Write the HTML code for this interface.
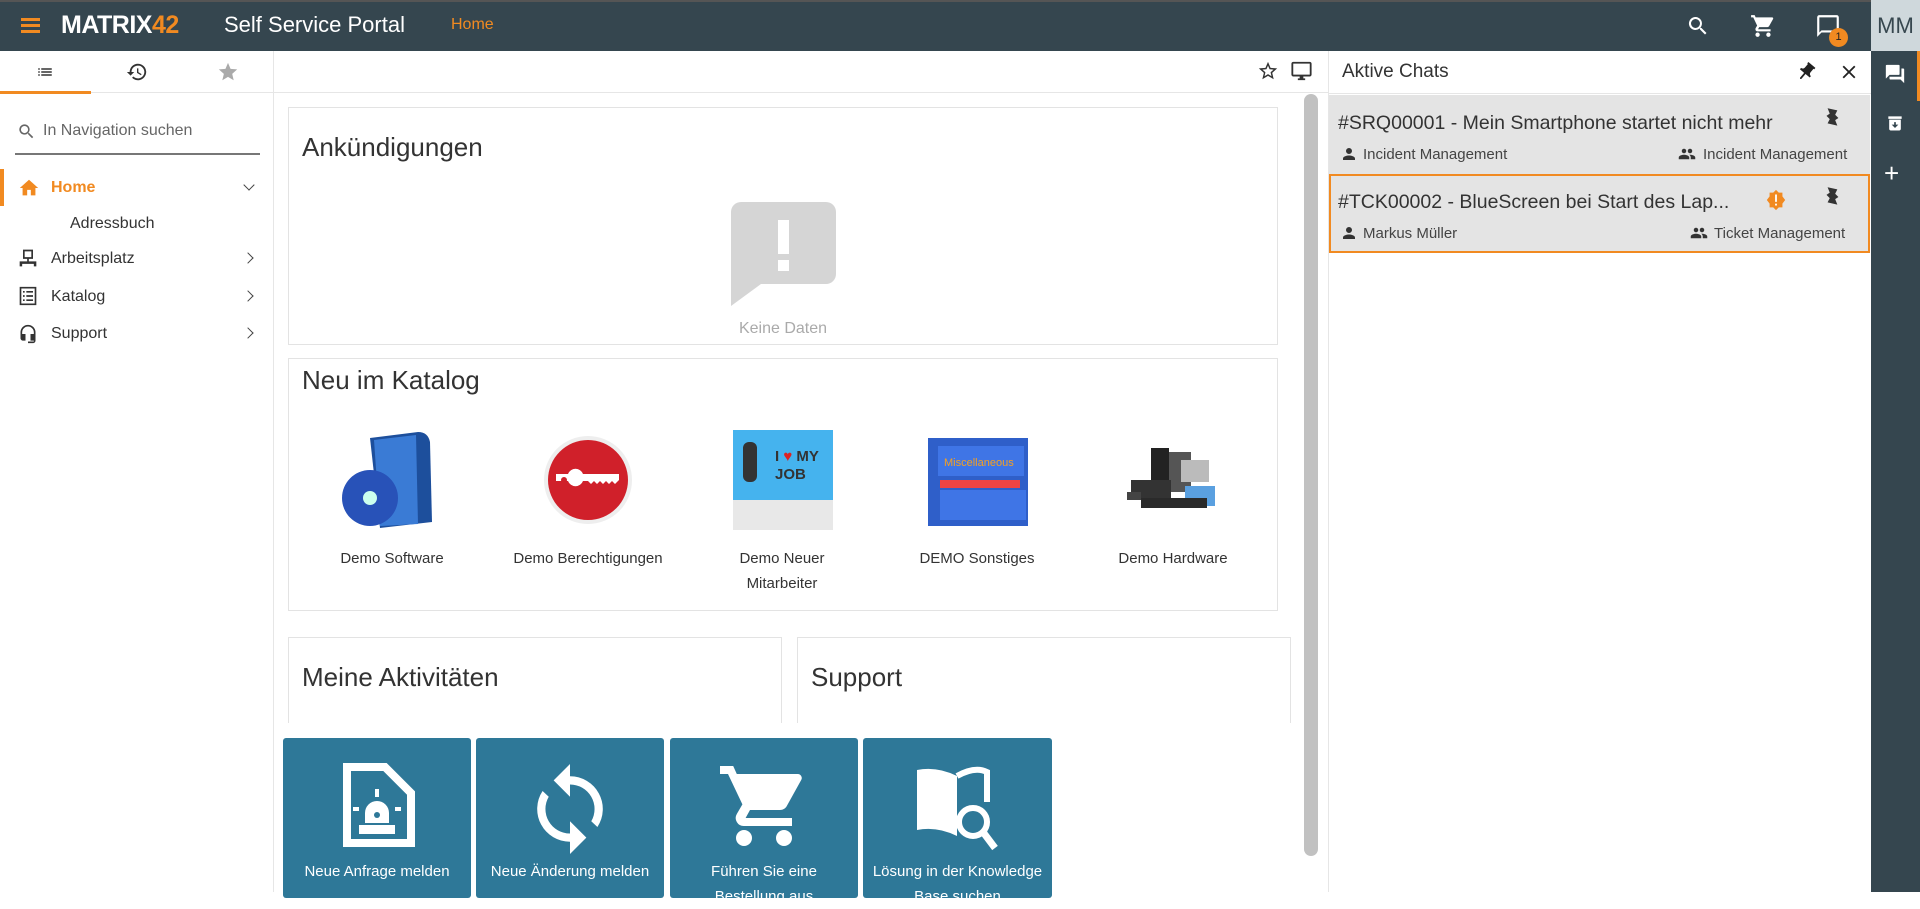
<!DOCTYPE html>
<html><head><meta charset="utf-8"><style>
*{box-sizing:border-box;margin:0;padding:0}
body{width:1920px;height:892px;overflow:hidden;font-family:"Liberation Sans",sans-serif;background:#fff;position:relative;color:#333}
.a{position:absolute}
.hdr{left:0;top:0;width:1920px;height:51px;background:#35464f;border-top:2px solid #555}
.wt{color:#fff}
.card{position:absolute;border:1px solid #e3e3e3;background:#fff}
.ct{position:absolute;left:13px;font-size:26px;color:#333}
.nav{position:absolute;left:51px;font-size:16px;color:#333}
.chev{position:absolute;left:244px;width:8px;height:8px;border-right:1.6px solid #444;border-bottom:1.6px solid #444}
.lbl{position:absolute;width:190px;text-align:center;font-size:15px;color:#333;line-height:25px}
.tile{position:absolute;top:738px;height:160px;background:#2e7898;border-radius:3px;color:#fff;text-align:center;font-size:15px}
.tile .t{position:absolute;top:121px;left:0;right:0;line-height:25px}
.chat{position:absolute;left:1329px;width:541px;height:79px;background:#e4e4e4}
.chat .h{position:absolute;left:9px;top:17px;font-size:19.5px;color:#333}
.chat .s{position:absolute;top:51px;font-size:15px;color:#444}
</style></head><body>
<div class="a hdr"></div>
<div class="a" style="left:21px;top:18px;width:19px;height:3px;background:#f18a21;box-shadow:0 6px 0 #f18a21,0 12px 0 #f18a21"></div>
<div class="a wt" style="left:61px;top:11px;font-size:25px;font-weight:bold;letter-spacing:-0.5px">MATRIX<span style="color:#f18a21">42</span></div>
<div class="a wt" style="left:224px;top:12px;font-size:22px">Self Service Portal</div>
<div class="a" style="left:451px;top:16px;font-size:16px;color:#f18a21">Home</div>
<svg class="a" style="left:1686px;top:14px" width="24" height="24" viewBox="0 0 24 24"><path fill="#fff" d="M15.5 14h-.8l-.3-.3A6.5 6.5 0 1 0 9.5 16a6.5 6.5 0 0 0 4.2-1.6l.3.3v.8l5 5 1.5-1.5-5-5zm-6 0a4.5 4.5 0 1 1 0-9 4.5 4.5 0 0 1 0 9z"/></svg>
<svg class="a" style="left:1750px;top:13px" width="26" height="26" viewBox="0 0 24 24"><path fill="#fff" d="M7 18a2 2 0 1 0 0 4 2 2 0 0 0 0-4zM1 2v2h2l3.6 7.6-1.4 2.4A2 2 0 0 0 7 17h12v-2H7.4l1.1-2h7.5c.7 0 1.4-.4 1.7-1l3.6-6.5A1 1 0 0 0 20.4 4H5.2l-.9-2H1zm16 16a2 2 0 1 0 0 4 2 2 0 0 0 0-4z"/></svg>
<svg class="a" style="left:1815px;top:13px" width="26" height="26" viewBox="0 0 24 24"><path fill="#fff" d="M20 2H4c-1.1 0-2 .9-2 2v18l4-4h14c1.1 0 2-.9 2-2V4c0-1.1-.9-2-2-2zm0 14H6l-2 2V4h16v12z"/></svg>
<div class="a" style="left:1829px;top:28px;width:19px;height:19px;border-radius:50%;background:#f18a21;color:#222;font-size:11px;text-align:center;line-height:19px">1</div>
<div class="a" style="left:1871px;top:0;width:49px;height:51px;background:#cfd8dc;color:#37474f;font-size:22px;text-align:center;line-height:51px">MM</div>
<div class="a" style="left:1871px;top:51px;width:49px;height:841px;background:#35464f"></div>
<div class="a" style="left:1917px;top:51px;width:3px;height:50px;background:#f18a21"></div>
<svg class="a" style="left:1884px;top:63px" width="22" height="22" viewBox="0 0 24 24"><path fill="#fff" d="M21 6h-2v9H6v2c0 .6.4 1 1 1h11l4 4V7c0-.6-.4-1-1-1zm-4 6V3c0-.6-.4-1-1-1H3c-.6 0-1 .4-1 1v14l4-4h10c.6 0 1-.4 1-1z"/></svg>
<svg class="a" style="left:1885px;top:113px" width="20" height="20" viewBox="0 0 24 24"><path fill="#fff" d="M20 4H4v3h16V4zM5 8v11c0 1 .9 2 2 2h10c1.1 0 2-1 2-2V8H5zm7 10l-4-4h3v-3h2v3h3l-4 4z"/></svg>
<div class="a wt" style="left:1884px;top:158px;font-size:26px">+</div>
<div class="a" style="left:273px;top:51px;width:1px;height:841px;background:#e6e6e6"></div>
<div class="a" style="left:0;top:92px;width:273px;height:1px;background:#e6e6e6"></div>
<div class="a" style="left:0;top:91px;width:91px;height:3px;background:#f18a21"></div>
<svg class="a" style="left:36px;top:63px" width="18" height="18" viewBox="0 0 24 24"><path fill="#333" d="M3 13h2v-2H3v2zm0 4h2v-2H3v2zm0-8h2V7H3v2zm4 4h14v-2H7v2zm0 4h14v-2H7v2zM7 7v2h14V7H7z"/></svg>
<svg class="a" style="left:126px;top:61px" width="22" height="22" viewBox="0 0 24 24"><path fill="#333" d="M13 3a9 9 0 0 0-9 9H1l4 4 4-4H6a7 7 0 1 1 2 4.9l-1.4 1.4A9 9 0 1 0 13 3zm-1 5v5l4.3 2.5.7-1.2-3.5-2.1V8H12z"/></svg>
<svg class="a" style="left:217px;top:61px" width="22" height="22" viewBox="0 0 24 24"><path fill="#aaa" d="M12 17.3l6.2 3.7-1.6-7L22 9.2l-7.2-.6L12 2 9.2 8.6 2 9.2 7.5 14l-1.7 7z"/></svg>
<svg class="a" style="left:17px;top:122px" width="19" height="19" viewBox="0 0 24 24"><path fill="#666" d="M15.5 14h-.8l-.3-.3A6.5 6.5 0 1 0 9.5 16a6.5 6.5 0 0 0 4.2-1.6l.3.3v.8l5 5 1.5-1.5-5-5zm-6 0a4.5 4.5 0 1 1 0-9 4.5 4.5 0 0 1 0 9z"/></svg>
<div class="a" style="left:43px;top:122px;font-size:16px;color:#666">In Navigation suchen</div>
<div class="a" style="left:15px;top:153px;width:245px;height:1.5px;background:#777"></div>
<div class="a" style="left:0;top:169px;width:4px;height:37px;background:#f18a21"></div>
<svg class="a" style="left:18px;top:177px" width="22" height="22" viewBox="0 0 24 24"><path fill="#f18a21" d="M10 20v-6h4v6h5v-8h3L12 3 2 12h3v8z"/></svg>
<div class="nav" style="top:179px;color:#f18a21;font-weight:bold">Home</div>
<div class="a" style="left:245px;top:181px;width:8px;height:8px;border-right:1.6px solid #444;border-bottom:1.6px solid #444;transform:rotate(45deg)"></div>
<div class="nav" style="left:70px;top:215px">Adressbuch</div>
<svg class="a" style="left:18px;top:248px" width="20" height="20" viewBox="0 0 24 24"><path fill="#333" d="M6 2h12v11H6zM8 4v7h8V4zM11 13h2v3h-2zM2 16h20v6h-3v-3H5v3H2z"/></svg>
<div class="nav" style="top:250px">Arbeitsplatz</div>
<div class="chev" style="top:254px;transform:rotate(-45deg)"></div>
<svg class="a" style="left:18px;top:286px" width="20" height="20" viewBox="0 0 24 24"><path fill="none" stroke="#333" stroke-width="2" d="M3 2h18v20H3z"/><path fill="#333" d="M6 6h2v2H6zm4 0h8v2h-8zM6 11h2v2H6zm4 0h8v2h-8zM6 16h2v2H6zm4 0h8v2h-8z"/></svg>
<div class="nav" style="top:288px">Katalog</div>
<div class="chev" style="top:292px;transform:rotate(-45deg)"></div>
<svg class="a" style="left:18px;top:323px" width="20" height="22" viewBox="0 0 24 24"><path fill="#333" d="M12 1a9 9 0 0 0-9 9v7c0 1.7 1.3 3 3 3h3v-8H5v-2a7 7 0 0 1 14 0v2h-4v8h4v1h-7v2h6c1.7 0 3-1.3 3-3V10a9 9 0 0 0-9-9z"/></svg>
<div class="nav" style="top:325px">Support</div>
<div class="chev" style="top:329px;transform:rotate(-45deg)"></div>
<div class="a" style="left:274px;top:92px;width:1055px;height:1px;background:#e6e6e6"></div>
<svg class="a" style="left:1257px;top:60px" width="22" height="22" viewBox="0 0 24 24"><path fill="#333" d="M22 9.2l-7.2-.6L12 2 9.2 8.6 2 9.2 7.5 14l-1.7 7 6.2-3.7 6.2 3.7-1.6-7L22 9.2zM12 15.4l-3.8 2.3 1-4.3-3.3-2.9 4.4-.4L12 6.1l1.7 4 4.4.4-3.3 2.9 1 4.3-3.8-2.3z"/></svg>
<svg class="a" style="left:1290px;top:60px" width="23" height="22" viewBox="0 0 24 24"><path fill="#333" d="M21 2H3c-1.1 0-2 .9-2 2v12c0 1.1.9 2 2 2h7v2H8v2h8v-2h-2v-2h7c1.1 0 2-.9 2-2V4c0-1.1-.9-2-2-2zm0 14H3V4h18v12z"/></svg>
<div class="a" style="left:1304px;top:94px;width:14px;height:762px;background:#c1c1c1;border-radius:7px"></div>
<div class="a" style="left:1328px;top:51px;width:1px;height:841px;background:#e6e6e6"></div>
<div class="card" style="left:288px;top:107px;width:990px;height:238px">
 <div class="ct" style="top:24px">Ankündigungen</div>
 <svg class="a" style="left:442px;top:94px" width="105" height="104" viewBox="0 0 105 104"><path fill="#d5d5d5" d="M10 0h85a10 10 0 0 1 10 10v62a10 10 0 0 1-10 10H30L0 104V10A10 10 0 0 1 10 0z"/><rect x="47" y="18" width="11" height="34" fill="#fff"/><rect x="47" y="58" width="11" height="11" fill="#fff"/></svg>
 <div class="a" style="left:0;width:100%;top:212px;text-align:center;font-size:16px;color:#aaa">Keine Daten</div>
</div>
<div class="card" style="left:288px;top:358px;width:990px;height:253px">
 <div class="ct" style="top:6px">Neu im Katalog</div>
</div>
<svg class="a" style="left:340px;top:430px" width="104" height="100" viewBox="0 0 104 100"><path fill="#1d4f9c" d="M30 8 L78 2 Q88 2 90 12 L92 92 L40 98 Z"/><path fill="#3a7bd5" d="M34 10 L76 5 L78 94 L40 96Z"/><circle cx="30" cy="68" r="28" fill="#2852b8"/><circle cx="30" cy="68" r="7" fill="#cfe"/></svg>
<svg class="a" style="left:542px;top:434px" width="92" height="92" viewBox="0 0 92 92"><circle cx="46" cy="46" r="44" fill="#eee"/><circle cx="46" cy="46" r="40" fill="#d0202a"/><path fill="#fff" d="M14 40h12a8 8 0 0 1 15 0h36v6l-4 4-3-3-3 3-3-3-3 3-3-3-3 3-3-3-3 3-3-3H41a8 8 0 0 1-15 0H14z"/><circle cx="22" cy="46" r="3" fill="#d0202a"/></svg>
<div class="a" style="left:733px;top:430px;width:100px;height:100px;background:#45b3ee">
 <div class="a" style="left:42px;top:18px;font-size:15px;font-weight:bold;color:#333;line-height:18px">I <span style="color:#d22">♥</span> MY<br>JOB</div>
 <div class="a" style="left:10px;top:12px;width:14px;height:40px;background:#333;border-radius:6px"></div>
 <div class="a" style="left:0;top:70px;width:100px;height:30px;background:#e8e8e8"></div>
</div>
<svg class="a" style="left:928px;top:434px" width="100" height="92" viewBox="0 0 100 92"><rect x="0" y="4" width="100" height="88" fill="#2f5fc9"/><rect x="10" y="12" width="86" height="30" fill="#3f75e6"/><text x="16" y="32" font-family="Liberation Sans" font-size="11" fill="#f6a020">Miscellaneous</text><rect x="12" y="46" width="80" height="8" fill="#e44"/><rect x="12" y="56" width="86" height="30" fill="#3f75e6"/></svg>
<svg class="a" style="left:1123px;top:440px" width="104" height="82" viewBox="0 0 104 82"><rect x="28" y="8" width="18" height="50" fill="#222"/><rect x="46" y="12" width="22" height="40" fill="#555"/><rect x="58" y="20" width="28" height="22" fill="#bbb"/><rect x="8" y="40" width="40" height="20" fill="#333"/><rect x="62" y="46" width="30" height="20" fill="#5aa0e0"/><rect x="18" y="58" width="66" height="10" fill="#2a2a2a"/><rect x="4" y="52" width="14" height="8" fill="#444"/></svg>
<div class="lbl" style="left:297px;top:546px">Demo Software</div>
<div class="lbl" style="left:493px;top:546px">Demo Berechtigungen</div>
<div class="lbl" style="left:687px;top:546px">Demo Neuer<br>Mitarbeiter</div>
<div class="lbl" style="left:882px;top:546px">DEMO Sonstiges</div>
<div class="lbl" style="left:1078px;top:546px">Demo Hardware</div>
<div class="card" style="left:288px;top:637px;width:494px;height:100px;border-bottom:none"><div class="ct" style="top:24px">Meine Aktivitäten</div></div>
<div class="card" style="left:797px;top:637px;width:494px;height:100px;border-bottom:none"><div class="ct" style="top:24px">Support</div></div>
<div class="a" style="left:280px;top:723px;width:1020px;height:15px;background:#fff"></div>
<div class="tile" style="left:283px;width:188px">
 <svg class="a" style="left:56px;top:25px" width="76" height="88" viewBox="0 0 76 88"><path fill="none" stroke="#fff" stroke-width="8" d="M8 4h38l26 26v50H8z"/><path fill="#fff" d="M26 50a12 12 0 0 1 24 0v10H26z"/><rect x="20" y="62" width="36" height="9" fill="#fff"/><circle cx="38" cy="52" r="3" fill="#2e7898"/><rect x="36" y="26" width="4" height="8" fill="#fff"/><rect x="14" y="44" width="6" height="4" fill="#fff"/><rect x="56" y="44" width="6" height="4" fill="#fff"/></svg>
 <div class="t">Neue Anfrage melden</div></div>
<div class="tile" style="left:476px;width:188px">
 <svg class="a" style="left:60px;top:26px" width="68" height="90" viewBox="4.5 1 15 22"><path fill="#fff" d="M12 4V1L8 5l4 4V6a6 6 0 0 1 5.2 9l1.5 1.4A8 8 0 0 0 12 4zm0 14a6 6 0 0 1-5.2-9L5.3 7.6A8 8 0 0 0 12 20v3l4-4-4-4v3z"/></svg>
 <div class="t">Neue Änderung melden</div></div>
<div class="tile" style="left:670px;width:188px">
 <svg class="a" style="left:50px;top:26px" width="84" height="88" viewBox="1 2 21 21"><path fill="#fff" d="M7 18a2 2 0 1 0 0 4 2 2 0 0 0 0-4zM1 2v2h2l3.6 7.6-1.4 2.4A2 2 0 0 0 7 17h12v-2H7.4l1.1-2h7.5c.7 0 1.4-.4 1.7-1l3.6-6.5A1 1 0 0 0 20.4 4H5.2l-.9-2H1zm16 16a2 2 0 1 0 0 4 2 2 0 0 0 0-4z"/></svg>
 <div class="t">Führen Sie eine<br>Bestellung aus</div></div>
<div class="tile" style="left:863px;width:189px">
 <svg class="a" style="left:50px;top:28px" width="90" height="88" viewBox="0 0 90 88"><path fill="#fff" d="M4 4q20-4 40 6v60q-20-10-40-6z"/><path fill="none" stroke="#fff" stroke-width="6" d="M44 10q18-10 30-4v30"/><circle cx="60" cy="56" r="14" fill="#2e7898" stroke="#fff" stroke-width="6"/><path stroke="#fff" stroke-width="7" d="M70 66l12 16"/></svg>
 <div class="t">Lösung in der Knowledge<br>Base suchen</div></div>
<div class="a" style="left:1342px;top:61px;font-size:19px;color:#333">Aktive Chats</div>
<svg class="a" style="left:1795px;top:61px" width="22" height="22" viewBox="0 0 24 24"><path fill="#222" d="M16 9V4h1V2H7v2h1v5c0 1.7-1.3 3-3 3v2h6v7l1 1 1-1v-7h6v-2c-1.7 0-3-1.3-3-3z" transform="rotate(40 12 12)"/></svg>
<svg class="a" style="left:1838px;top:61px" width="22" height="22" viewBox="0 0 24 24"><path fill="#222" d="M19 6.4L17.6 5 12 10.6 6.4 5 5 6.4 10.6 12 5 17.6 6.4 19 12 13.4 17.6 19 19 17.6 13.4 12z"/></svg>
<div class="a" style="left:1329px;top:93px;width:542px;height:1px;background:#e6e6e6"></div>
<div class="chat" style="top:95px">
 <div class="h">#SRQ00001 - Mein Smartphone startet nicht mehr</div>
 <svg class="a" style="left:491px;top:10px" width="26" height="26" viewBox="0 0 24 24"><path fill="#333" d="M7 3l9 2-2 4 3 3-3 2 2 5-9-2 2-4-3-3 3-2z"/></svg>
 <svg class="a" style="left:11px;top:50px" width="18" height="18" viewBox="0 0 24 24"><path fill="#333" d="M12 12a4 4 0 1 0 0-8 4 4 0 0 0 0 8zm0 2c-2.7 0-8 1.3-8 4v2h16v-2c0-2.7-5.3-4-8-4z"/></svg>
 <div class="s" style="left:34px">Incident Management</div>
 <svg class="a" style="left:347px;top:50px" width="22" height="18" viewBox="0 0 24 24"><path fill="#333" d="M16 11a3 3 0 1 0 0-6 3 3 0 0 0 0 6zm-8 0a3 3 0 1 0 0-6 3 3 0 0 0 0 6zm0 2c-2.3 0-7 1.2-7 3.5V19h14v-2.5C15 14.2 10.3 13 8 13zm8 0h-1c1.2.8 2 2 2 3.5V19h6v-2.5c0-2.3-4.7-3.5-7-3.5z"/></svg>
 <div class="s" style="left:374px">Incident Management</div>
</div>
<div class="chat" style="top:174px;height:79px;border:2px solid #f18a21">
 <div class="h" style="left:7px;top:15px">#TCK00002 - BlueScreen bei Start des Lap...</div>
 <svg class="a" style="left:434px;top:13px" width="22" height="22" viewBox="0 0 24 24"><path fill="#f18a21" d="M12 1l3 3h4v4l3 4-3 4v4h-4l-3 3-3-3H5v-4l-3-4 3-4V4h4z"/><rect x="11" y="6" width="2" height="8" fill="#fff"/><rect x="11" y="16" width="2" height="2" fill="#fff"/></svg>
 <svg class="a" style="left:489px;top:8px" width="26" height="26" viewBox="0 0 24 24"><path fill="#333" d="M7 3l9 2-2 4 3 3-3 2 2 5-9-2 2-4-3-3 3-2z"/></svg>
 <svg class="a" style="left:9px;top:48px" width="18" height="18" viewBox="0 0 24 24"><path fill="#333" d="M12 12a4 4 0 1 0 0-8 4 4 0 0 0 0 8zm0 2c-2.7 0-8 1.3-8 4v2h16v-2c0-2.7-5.3-4-8-4z"/></svg>
 <div class="s" style="left:32px;top:49px">Markus Müller</div>
 <svg class="a" style="left:357px;top:48px" width="22" height="18" viewBox="0 0 24 24"><path fill="#333" d="M16 11a3 3 0 1 0 0-6 3 3 0 0 0 0 6zm-8 0a3 3 0 1 0 0-6 3 3 0 0 0 0 6zm0 2c-2.3 0-7 1.2-7 3.5V19h14v-2.5C15 14.2 10.3 13 8 13zm8 0h-1c1.2.8 2 2 2 3.5V19h6v-2.5c0-2.3-4.7-3.5-7-3.5z"/></svg>
 <div class="s" style="left:383px;top:49px">Ticket Management</div>
</div>
</body></html>
